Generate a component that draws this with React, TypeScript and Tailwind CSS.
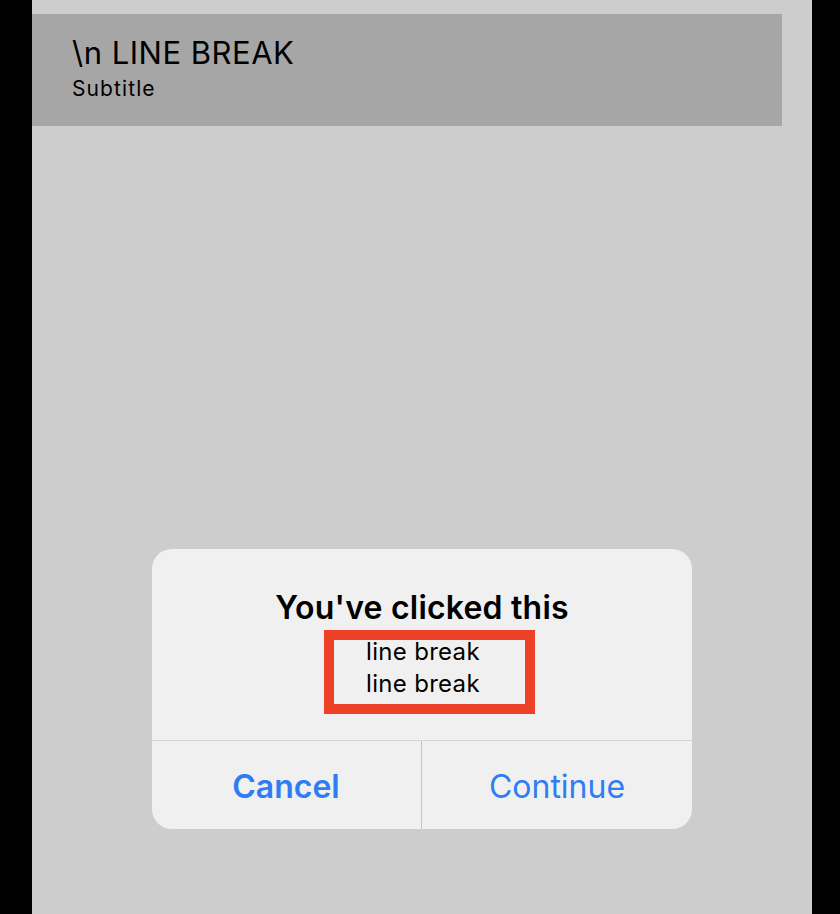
export default function App() {
  return (
    <div className="w-[840px] h-[914px] bg-black flex font-['Inter','Liberation_Sans',sans-serif]">
      <div className="ml-[32px] w-[780px] h-full bg-[#cdcdcd] flex flex-col pt-[14px]">
        {/* HEADER */}
        <div className="w-[750px] h-[112px] bg-[#a6a6a7] pl-[40px] pt-[20px]">
          <div className="text-[31px] leading-[38px] text-black tracking-[0.5px]">
            \n LINE BREAK
          </div>
          <div className="text-[21px] leading-[28px] text-black mt-[3px] tracking-[1.1px]">
            Subtitle
          </div>
        </div>

        {/* ALERT */}
        <div className="mt-[423px] ml-[120px] w-[540px] h-[280px] bg-[#f0f0f0] rounded-[20px] flex flex-col">
          <div className="relative h-[191px] flex flex-col items-center pt-[39px]">
            <div className="text-[32px] leading-[40px] font-semibold text-black tracking-[0.2px]">
              You've clicked this
            </div>
            <div className="text-[24px] leading-[32px] text-black text-center mt-[8px] tracking-[0.3px] pl-[2px]">
              line break
              <br />
              line break
            </div>
            <div className="absolute left-[172px] top-[81px] w-[211px] h-[84px] border-[10px] border-[#ee4026]" />
          </div>
          <div className="flex-1 flex border-t border-[#d6d6d6]">
            <div className="w-[270px] flex items-center justify-center border-r border-[#c4c4c4] text-[32px] font-semibold text-[#2f7df6] pr-[1px] pt-[3px]">
              Cancel
            </div>
            <div className="flex-1 flex items-center justify-center text-[32px] text-[#2f7df6] pt-[3px]">
              Continue
            </div>
          </div>
        </div>
      </div>
    </div>
  );
}
